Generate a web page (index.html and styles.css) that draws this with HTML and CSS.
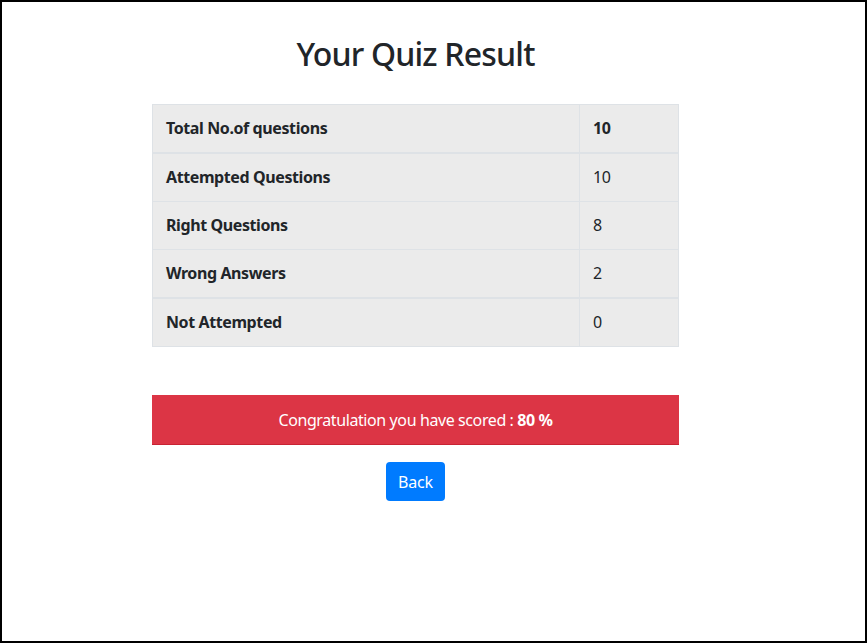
FILE: index.html
```html
<!DOCTYPE html>
<html>
<head>
<meta charset="utf-8">
<link rel="stylesheet" href="styles.css">
</head>
<body>
<div class="frame">
  <div class="content">
    <h1 class="title">Your Quiz Result</h1>
    <table class="result">
      <thead>
        <tr><th>Total No.of questions</th><th class="val">10</th></tr>
      </thead>
      <tbody>
        <tr><th>Attempted Questions</th><td class="val">10</td></tr>
        <tr><th>Right Questions</th><td class="val">8</td></tr>
        <tr class="sep"><th>Wrong Answers</th><td class="val">2</td></tr>
        <tr><th>Not Attempted</th><td class="val">0</td></tr>
      </tbody>
    </table>
    <div class="alert">Congratulation you have scored : <b>80 %</b></div>
    <div class="actions"><button class="btn">Back</button></div>
  </div>
</div>
</body>
</html>
```
FILE: styles.css
```css
html, body {
  margin: 0;
  padding: 0;
}
body {
  font-family: "Noto Sans", "Open Sans", sans-serif;
  color: #212529;
  background: #fff;
  letter-spacing: -0.4px;
}
.frame {
  box-sizing: border-box;
  width: 867px;
  height: 643px;
  border: 2px solid #000;
  background: #fff;
}
.content {
  width: 527px;
  margin-left: 150px;
  padding-top: 30px;
}
.title {
  margin: 0 0 28px;
  text-align: center;
  font-size: 32px;
  font-weight: 500;
  line-height: 44px;
  letter-spacing: -0.8px;
}
.result {
  width: 527px;
  border-collapse: collapse;
  background: #ebebeb;
  font-size: 16px;
}
.result th, .result td {
  border: 1px solid #dee2e6;
  padding: 12px 13px;
  text-align: left;
  height: 23px;
  line-height: 23px;
}
.result th {
  font-weight: 700;
}
.result td {
  font-weight: 400;
}
.result thead th {
  border-bottom: 2px solid #dee2e6;
}
.result .sep th, .result .sep td {
  border-bottom: 2px solid #dee2e6;
}
.result .val {
  width: 72px;
}
.alert {
  margin-top: 48px;
  height: 50px;
  line-height: 50px;
  background: #dc3545;
  border-bottom: 1px solid #c82333;
  box-sizing: border-box;
  color: #fff;
  text-align: center;
  font-size: 16px;
}
.actions {
  display: flex;
  justify-content: center;
  margin-top: 17px;
}
.btn {
  font-family: inherit;
  font-size: 16px;
  letter-spacing: -0.2px;
  color: #fff;
  background: #007bff;
  border: none;
  border-radius: 4px;
  width: 59px;
  height: 39px;
  padding: 0;
}
```
